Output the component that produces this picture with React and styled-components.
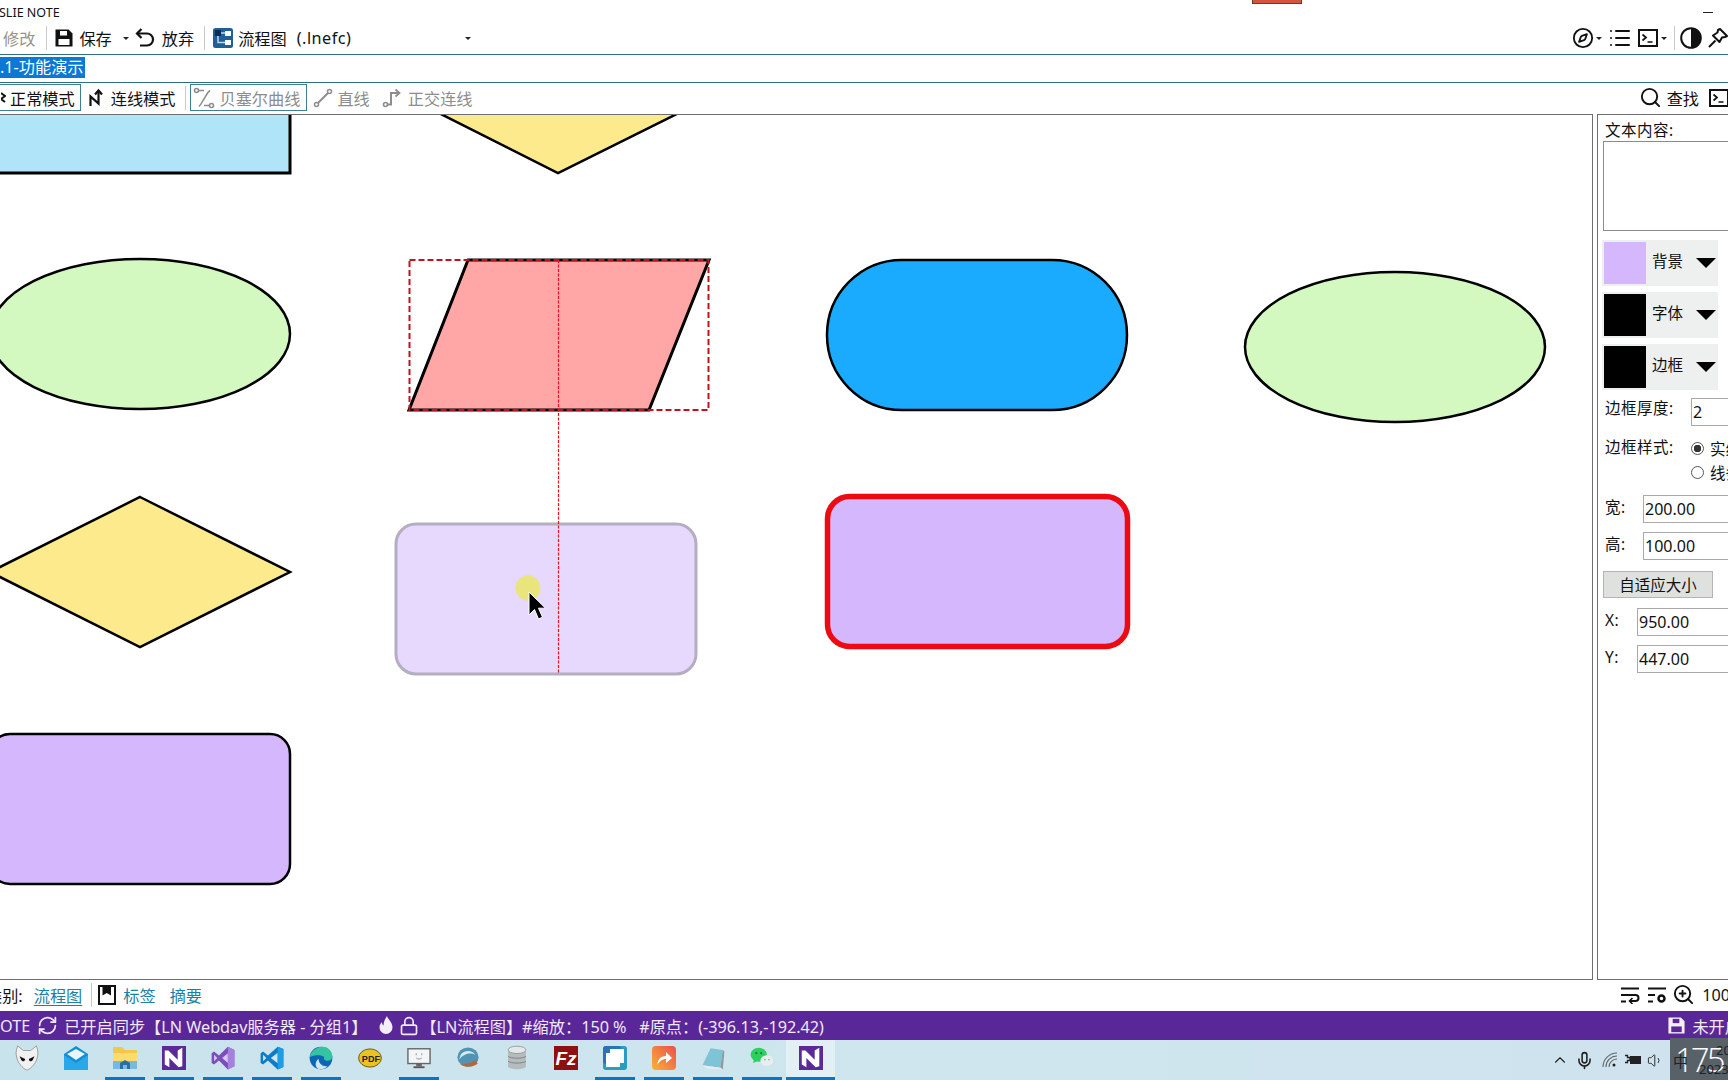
import React from "react";
import styled, { createGlobalStyle } from "styled-components";
import { ChevronUp, Compass, List, Lock, Mic, RefreshCw, Search, Volume1, ZoomIn } from "lucide-react";

const Globalstyles = createGlobalStyle`
  html, body {
    margin: 0;
    width: 1728px;
    height: 1080px;
    overflow: hidden;
    background: #fff;
    font-family: "Noto Sans", "Noto Sans CJK SC", sans-serif;
    color: #111;
  }
  * { box-sizing: border-box; }
`;

const Page = styled.div`
  width: 1728px;
  height: 1080px;
  display: flex;
  flex-direction: column;
  overflow: hidden;
`;

const TitleBar = styled.div`
  height: 24px;
  flex: none;
  display: flex;
  align-items: center;
  justify-content: space-between;
  font-size: 12.5px;
  padding-right: 15px;
  position: relative;
`;

const AppName = styled.span`
  margin-left: -1px;
`;

const TitleTab = styled.div`
  position: absolute;
  left: 1252px;
  top: 0;
  width: 50px;
  height: 4px;
  background: #d2563f;
  border: 1px solid #7d3527;
  border-top: 0;
`;

const MinButton = styled.span`
  width: 10px;
  height: 1px;
  background: #222;
`;

const Bar = styled.div`
  height: ${(p) => p.$height}px;
  flex: none;
  display: flex;
  align-items: center;
  font-size: 16.2px;
  white-space: nowrap;
  padding-bottom: 2px;
  border-bottom: ${(p) => (p.$line ? `1px solid ${p.$line}` : "none")};
`;

const Spacer = styled.div`
  flex: 1;
`;

const Item = styled.span`
  display: inline-flex;
  align-items: center;
  flex: none;
  margin-left: ${(p) => p.$left || 0}px;
  margin-right: ${(p) => p.$right || 0}px;
  color: ${(p) => p.$color || "inherit"};
  letter-spacing: ${(p) => p.$spacing || 0}px;
`;

const Divider = styled.span`
  width: 1px;
  height: 24px;
  flex: none;
  background: #c9c9c9;
  margin-left: ${(p) => p.$left || 0}px;
`;

const Caret = styled.span`
  width: 0;
  height: 0;
  flex: none;
  margin-left: ${(p) => p.$left || 0}px;
  border-left: 3px solid transparent;
  border-right: 3px solid transparent;
  border-top: 3px solid #222;
`;

const ModeButton = styled.span`
  height: 27px;
  flex: none;
  display: inline-flex;
  align-items: center;
  border: 1px solid #3f7f92;
  margin-left: ${(p) => p.$left || 0}px;
  padding: ${(p) => p.$padding};
  color: ${(p) => p.$color || "inherit"};
`;

const TitleInput = styled.div`
  height: 27px;
  display: flex;
  align-items: center;
`;

const Selected = styled.span`
  background: #0a78d4;
  color: #fff;
  line-height: 21px;
  padding-right: 1px;
`;

const Main = styled.div`
  height: 866px;
  flex: none;
  display: flex;
  gap: 4px;
  overflow: hidden;
`;

const Canvas = styled.div`
  width: 1593px;
  flex: none;
  border-top: 1px solid #6f6f6f;
  border-right: 1px solid #6f6f6f;
  border-bottom: 1px solid #6f6f6f;
  overflow: hidden;
`;

const Drawing = styled.svg`
  display: block;
`;

const Panel = styled.div`
  flex: 1;
  min-width: 0;
  border-top: 1px solid #6f6f6f;
  border-left: 1px solid #6f6f6f;
  border-bottom: 1px solid #6f6f6f;
  padding-left: 5px;
  overflow: hidden;
  font-size: 15.5px;
  white-space: nowrap;
`;

const PanelTitle = styled.div`
  height: 26px;
  padding: 5px 0 0 2px;
  line-height: 20px;
  letter-spacing: 0.5px;
`;

const TextArea = styled.div`
  width: 200px;
  height: 90px;
  border: 1px solid #8b8b8b;
`;

const ColorRow = styled.div`
  width: 116px;
  height: 46px;
  display: flex;
  align-items: center;
  background: #eef0ef;
  margin-top: ${(p) => p.$top}px;
  margin-left: -1px;
  padding-left: 2px;
`;

const Swatch = styled.span`
  width: 42px;
  height: 42px;
  flex: none;
  background: ${(p) => p.$color};
`;

const ColorName = styled.span`
  margin-left: 6px;
  padding-bottom: 5px;
  flex: 1;
`;

const BigArrow = styled.span`
  width: 0;
  height: 0;
  flex: none;
  margin-right: 2px;
  border-left: 10px solid transparent;
  border-right: 10px solid transparent;
  border-top: 10px solid #000;
`;

const FieldRow = styled.div`
  display: flex;
  align-items: ${(p) => (p.$start ? "flex-start" : "center")};
  margin-top: ${(p) => p.$top}px;
  padding-left: 2px;
`;

const FieldLabel = styled.span`
  width: ${(p) => p.$width}px;
  flex: none;
  position: relative;
  top: ${(p) => p.$raise || -2}px;
  line-height: 24px;
  letter-spacing: 0.5px;
`;

const Field = styled.input`
  width: 200px;
  height: 28px;
  flex: none;
  border: 1px solid #a9a9a9;
  border-radius: 0;
  padding: 0 1px;
  font: 16px "Noto Sans", sans-serif;
  color: #111;
  outline: none;
`;

const RadioGroup = styled.div`
  display: flex;
  flex-direction: column;
  gap: 2px;
`;

const RadioLine = styled.div`
  height: 22px;
  display: flex;
  align-items: center;
  gap: 6px;
`;

const Radio = styled.span`
  width: 13px;
  height: 13px;
  flex: none;
  border-radius: 50%;
  border: 1px solid #555;
  background: ${(p) => (p.$checked ? "radial-gradient(circle, #333 0 3.5px, #fff 4px)" : "#fff")};
`;

const FitButton = styled.div`
  width: 110px;
  height: 27px;
  margin-top: 11px;
  display: flex;
  align-items: center;
  justify-content: center;
  background: #dfe1de;
  border: 1px solid #b4b4b4;
`;

const LinkTab = styled.span`
  color: #1b7fa6;
  flex: none;
  margin-left: ${(p) => p.$left || 0}px;
  text-decoration: ${(p) => (p.$active ? "underline" : "none")};
  text-underline-offset: 3px;
`;

const StatusBar = styled.div`
  height: 29px;
  flex: none;
  display: flex;
  align-items: center;
  background: #5a2799;
  color: #f0e9f8;
  font-size: 16.2px;
  white-space: nowrap;
`;

const TaskBar = styled.div`
  height: 40px;
  flex: none;
  display: flex;
  align-items: stretch;
  padding-left: 2px;
  background: linear-gradient(90deg, #c9e3ec, #cfe6ee 60%, #cfe2ee);
`;

const TaskSlot = styled.div`
  width: 49px;
  flex: none;
  display: flex;
  align-items: center;
  justify-content: center;
  padding-bottom: 4px;
  background: ${(p) => (p.$active ? "#e2f0f5" : "transparent")};
  position: relative;

  &::after {
    content: "";
    display: ${(p) => (p.$running ? "block" : "none")};
    position: absolute;
    bottom: 0;
    height: 3px;
    left: ${(p) => (p.$active ? "0" : "5px")};
    right: ${(p) => (p.$active ? "0" : "4px")};
    background: #0f74bd;
  }
`;

const Tray = styled.div`
  margin-left: auto;
  display: flex;
  align-items: center;
  color: #222;
`;

const TrayIcon = styled.span`
  display: inline-flex;
  margin-left: ${(p) => p.$left}px;
`;

const TrayText = styled.span`
  font-size: 15px;
  width: 16px;
  margin-left: 9px;
  margin-right: -19px;
  position: relative;
  z-index: 1;
`;

const Clock = styled.div`
  width: 58px;
  height: 42px;
  margin-top: -2px;
  background: #596168;
  color: #fff;
  font: 300 33px/44px "Open Sans", sans-serif;
  overflow: hidden;
  padding-left: 5px;
  letter-spacing: -3px;
  position: relative;
`;

const ClockDate = styled.span`
  position: absolute;
  color: #1d2226;
  font: 400 13px/15px "Noto Sans", sans-serif;
  left: 29px;
  top: 24px;
  letter-spacing: 0;
`;

const ClockYear = styled(ClockDate)`
  left: 46px;
  top: 5px;
`;

const SaveIcon = ({ size = 20, color = "#111" }) => (
  <svg width={size} height={size} viewBox="0 0 20 20" fill="none">
    <path d="M1.500 1.500h13l4 4v13h-17z" fill={color} />
    <rect x="6" y="3" width="7" height="4.500" fill={color === "#111" ? "#fff" : "#5a2799"} />
    <rect x="4.500" y="11" width="11" height="6" fill={color === "#111" ? "#fff" : "#5a2799"} />
  </svg>
);

const UndoIcon = () => (
  <svg width="20" height="20" viewBox="0 0 20 20" fill="none" stroke="#111" strokeWidth="2.200">
    <path d="M2 5.500h10a6 6 0 0 1 0 12H5" />
    <path d="M6.500 1L2 5.500 6.500 10" />
  </svg>
);

const FlowIcon = () => (
  <svg width="20" height="20" viewBox="0 0 20 20">
    <rect width="20" height="20" rx="2.500" fill="#1f5f99" />
    <rect x="2" y="2" width="6" height="6" fill="#0c2c55" />
    <rect x="12" y="3" width="6" height="5" fill="#fff" />
    <rect x="12" y="12" width="6" height="5" fill="#fff" />
    <path d="M8 5h4M5 8v6.500h7" stroke="#bcd8ee" strokeWidth="1.500" fill="none" />
  </svg>
);

const TerminalBox = () => (
  <svg width="20" height="20" viewBox="0 0 20 20" fill="none" stroke="#111" strokeWidth="2">
    <rect x="1" y="2" width="18" height="16" />
    <path d="M4.500 6.500L8 9.500l-3.500 3M9.500 14h5" strokeWidth="1.700" />
  </svg>
);

const ContrastIcon = () => (
  <svg width="22" height="22" viewBox="0 0 22 22">
    <circle cx="11" cy="11" r="9.800" fill="none" stroke="#111" strokeWidth="2" />
    <path d="M11 1a10 10 0 0 1 0 20z" fill="#111" />
  </svg>
);

const PinIcon = () => (
  <svg width="22" height="22" viewBox="0 0 22 22" fill="none" stroke="#111" strokeWidth="2" strokeLinejoin="round">
    <path d="M13 2l7 7-2 1-3 .500-2.500 4.500-6.500-6.500L10.500 5.500 11 3z" />
    <path d="M8.500 13.500L2 20" />
  </svg>
);

const ModeFragment = () => (
  <svg width="5" height="16" viewBox="0 0 5 16" fill="none" stroke="#111" strokeWidth="2">
    <path d="M0 3l4 3-4 3M0 9l4 3" />
  </svg>
);

const ConnectIcon = () => (
  <svg width="16" height="20" viewBox="0 0 16 20" fill="none" stroke="#111" strokeWidth="2.200">
    <path d="M1.500 18V8.500l8 7V3" />
    <path d="M6 6.500l3.500-4 3.500 4" />
  </svg>
);

const BezierIcon = () => (
  <svg width="22" height="22" viewBox="0 0 22 22" fill="none" stroke="#8d8d8d" strokeWidth="1.600">
    <circle cx="3.500" cy="3.500" r="2" />
    <circle cx="18.500" cy="18.500" r="2" />
    <path d="M6 3.500h5M11 18.500h5M17 3.500c-3 2-4 6-7 10-1 2-2 4-4 6" />
  </svg>
);

const LineIcon = () => (
  <svg width="20" height="20" viewBox="0 0 20 20" fill="none" stroke="#8d8d8d" strokeWidth="1.500">
    <circle cx="3.500" cy="16.500" r="2" />
    <circle cx="16.500" cy="3.500" r="2" />
    <path d="M5 15L15 5" strokeWidth="2" />
  </svg>
);

const OrthoIcon = () => (
  <svg width="20" height="20" viewBox="0 0 20 20" fill="none" stroke="#8d8d8d" strokeWidth="1.600">
    <circle cx="3.500" cy="16.500" r="2" />
    <path d="M5.500 16.500H9V5h7" strokeWidth="2" />
    <path d="M13.500 1.500L17.500 5l-4 3.500" strokeWidth="1.800" />
  </svg>
);

const BookmarkBox = () => (
  <svg width="18" height="20" viewBox="0 0 18 20" fill="none">
    <rect x="1" y="1" width="16" height="18" stroke="#111" strokeWidth="2" />
    <path d="M4.500 1h8.500v9.500l-4.200-2.500-4.300 2.500z" fill="#111" />
  </svg>
);

const WrapLines = () => (
  <svg width="20" height="18" viewBox="0 0 20 18" fill="none" stroke="#111" strokeWidth="2">
    <path d="M1 2.500h18M1 9h14.500a3 3 0 0 1 0 6H10M1 15.500h5" />
    <path d="M12.500 12l-3 3 3 3" strokeWidth="1.600" />
  </svg>
);

const GearLines = () => (
  <svg width="20" height="18" viewBox="0 0 20 18" fill="none" stroke="#111" strokeWidth="2">
    <path d="M1 2.500h18M1 9h7M1 15.500h5" />
    <circle cx="14.500" cy="12.500" r="3" strokeWidth="2.500" />
  </svg>
);

const FlameIcon = () => (
  <svg width="16" height="20" viewBox="0 0 16 20" fill="#f4eef9">
    <path d="M9 0c.5 3 5.500 6 5.500 11.500a6.500 6.500 0 0 1-13 0c0-2.500 1-4 2.500-5.500 0 2 .5 3 1.500 3.500C5.500 6 7 3 9 0z" />
  </svg>
);

const WifiIcon = () => (
  <svg width="16" height="16" viewBox="0 0 16 16" fill="none" stroke="#333" strokeWidth="1.100">
    <path d="M1 15A14 14 0 0 1 15 1M4 15A11 11 0 0 1 15 4M7 15a8 8 0 0 1 8-8" opacity=".7" />
    <circle cx="12" cy="13" r="1.500" fill="#222" stroke="none" />
  </svg>
);

const BatteryIcon = () => (
  <svg width="17" height="14" viewBox="0 0 17 14">
    <path d="M1 2.500h2.500v2H6v3H3.500v2H1" fill="none" stroke="#222" strokeWidth="1.300" />
    <rect x="6" y="3" width="11" height="8" fill="#222" />
  </svg>
);

const AlienApp = () => (
  <svg width="30" height="30" viewBox="0 0 32 32">
    <path d="M6 3l6 5h8l6-5c2 5 2 9 1 12-1 6-6 12-11 14-5-2-10-8-11-14-1-3-1-7 1-12z" fill="#f1f1f1" stroke="#9a9a9a" />
    <path d="M8 14l6 3c0 3-3 3-4 1.500zM24 14l-6 3c0 3 3 3 4 1.500z" fill="#111" />
  </svg>
);

const MailApp = () => (
  <svg width="26" height="26" viewBox="0 0 26 26">
    <path d="M1 9L13 1l12 8v16H1z" fill="#0f8fd8" />
    <path d="M4 9L13 4l9 5-9 6z" fill="#e8f5fb" />
    <path d="M1 10l12 8 12-8v15H1z" fill="#29a7e6" />
  </svg>
);

const FolderApp = () => (
  <svg width="24" height="24" viewBox="0 0 24 24">
    <path d="M0 1h9l3 3h12v17H0z" fill="#f4c64a" />
    <path d="M0 7h24v10H0z" fill="#fbdc6d" />
    <rect x="0" y="15" width="24" height="8" fill="#7ab9dc" />
    <path d="M7 23v-6l5-3 5 3v6h-3v-4h-4v4z" fill="#2c6ea3" />
  </svg>
);

const NoteApp = () => (
  <svg width="24" height="24" viewBox="0 0 26 26">
    <rect width="26" height="26" fill="#5c2a98" />
    <path d="M3 5h4l10 10V5l5-3v20l-4 1L8 13v10l-5-3z" fill="#fff" />
  </svg>
);

const StudioApp = () => (
  <svg width="26" height="26" viewBox="0 0 32 32">
    <path d="M22 2l8 4v20l-8 4-11-11-6 5-3-2V10l3-2 6 5z" fill="#7c4dbd" />
    <path d="M22 10v12l-7-6z" fill="#d9c6f1" />
    <path d="M5 12l4 4-4 4z" fill="#d9c6f1" />
    <path d="M22 2l8 4v20l-8 4z" fill="#a67fe0" />
  </svg>
);

const CodeApp = () => (
  <svg width="26" height="26" viewBox="0 0 32 32">
    <path d="M23 2l7 3v22l-7 3-12-11-6 5-3-2V10l3-2 6 5z" fill="#0d7cc6" />
    <path d="M23 9.500v13L14.500 16z" fill="#cfe6ee" />
    <path d="M5 12l4 4-4 4z" fill="#cfe6ee" />
    <path d="M23 2l7 3v22l-7 3z" fill="#1f9de4" />
  </svg>
);

const EdgeApp = () => (
  <svg width="26" height="26" viewBox="0 0 32 32">
    <circle cx="16" cy="16" r="14" fill="#0c65b5" />
    <path d="M2 15C4 6 12 2 18 2c7 0 12 6 12 12 0 4-4 6-8 5-2-.5-3-2-2-4-3-3-12-3-18 0z" fill="#35c4a0" />
    <path d="M13 17c0 6 5 10 11 9-3 3-8 5-12 3-4-3-3-9 1-12z" fill="#cfe6ee" />
  </svg>
);

const PdfApp = () => (
  <svg width="24" height="20" viewBox="0 0 26 22">
    <ellipse cx="13" cy="11" rx="12.500" ry="10" fill="#e9c41e" stroke="#5e5218" />
    <text x="14" y="15" textAnchor="middle" fontSize="10" fontWeight="700" fontFamily="Liberation Sans" fill="#222">PDF</text>
  </svg>
);

const MonitorApp = () => (
  <svg width="24" height="24" viewBox="0 0 26 26">
    <rect x="1" y="3" width="24" height="16" fill="#f2f6f7" stroke="#666" strokeWidth="1.500" />
    <path d="M10 8v2M16 8v2M10 13c2 1.500 4 1.500 6 0" stroke="#888" fill="none" />
    <rect x="10" y="19" width="6" height="3" fill="#666" />
    <rect x="7" y="22" width="12" height="2" fill="#555" />
  </svg>
);

const SwirlApp = () => (
  <svg width="26" height="26" viewBox="0 0 32 32">
    <ellipse cx="16" cy="15" rx="13" ry="12" fill="#4f94b3" />
    <path d="M5 18c6-8 15-9 20-6-4-6-14-6-18 0z" fill="#d5ecf4" />
    <path d="M6 24c6 3 15 4 22-1l-3-5c-3 3-10 5-19 6z" fill="#b2683c" />
  </svg>
);

const DiskApp = () => (
  <svg width="22" height="26" viewBox="0 0 26 32">
    <path d="M2 6v20c0 5 22 5 22 0V6z" fill="#b4bcbe" />
    <ellipse cx="13" cy="6" rx="11" ry="4.500" fill="#e4e8e8" stroke="#8b9395" />
    <path d="M2 14c4 3 18 3 22 0M2 20c4 3 18 3 22 0" stroke="#777" fill="none" />
  </svg>
);

const ZillaApp = () => (
  <svg width="24" height="24" viewBox="0 0 24 24">
    <rect width="24" height="24" fill="#8e1010" />
    <text x="12" y="19" textAnchor="middle" fontSize="19" fontWeight="700" fontStyle="italic" fontFamily="Liberation Sans" fill="#fff">Fz</text>
  </svg>
);

const WindowApp = () => (
  <svg width="24" height="24" viewBox="0 0 24 24">
    <rect width="24" height="24" rx="3" fill="#2a9cc0" />
    <rect y="0" width="18" height="18" rx="3" fill="#2a73b8" />
    <rect x="3" y="7" width="14" height="14" fill="#fff" />
    <rect x="7" y="3" width="14" height="14" fill="#fff" />
  </svg>
);

const ShareApp = () => (
  <svg width="24" height="24" viewBox="0 0 24 24">
    <defs>
      <linearGradient id="shareGrad" x1="0" y1="1" x2="1" y2="0">
        <stop offset="0" stopColor="#f9b233" />
        <stop offset="1" stopColor="#ee4d4d" />
      </linearGradient>
    </defs>
    <rect width="24" height="24" rx="4" fill="url(#shareGrad)" />
    <path d="M5 19c1-6 4-9 9-9V6l6 6-6 5v-4c-4 0-6 2-9 6z" fill="#fff" />
  </svg>
);

const PadApp = () => (
  <svg width="26" height="26" viewBox="0 0 32 32">
    <path d="M3 25L13 4l15 2-3 22z" fill="#7fc4d6" />
    <path d="M25 28l3-22 2 2-2 22z" fill="#8d9a9e" />
    <path d="M3 25l22 3 3 2-20-1z" fill="#e6eced" />
  </svg>
);

const ChatApp = () => (
  <svg width="26" height="26" viewBox="0 0 32 32">
    <ellipse cx="12" cy="12" rx="10" ry="8.500" fill="#2bd05f" />
    <path d="M6 18l-1 4 5-2z" fill="#2bd05f" />
    <circle cx="9" cy="10" r="1.300" fill="#0f7a3a" />
    <circle cx="15" cy="10" r="1.300" fill="#0f7a3a" />
    <ellipse cx="22" cy="19" rx="8" ry="6.500" fill="#e8eeef" />
    <circle cx="19.500" cy="18" r="1" fill="#9aa3a5" />
    <circle cx="24.500" cy="18" r="1" fill="#9aa3a5" />
  </svg>
);

const apps = [
  { Icon: AlienApp },
  { Icon: MailApp },
  { Icon: FolderApp, running: true },
  { Icon: NoteApp, running: true },
  { Icon: StudioApp, running: true },
  { Icon: CodeApp, running: true },
  { Icon: EdgeApp, running: true },
  { Icon: PdfApp },
  { Icon: MonitorApp, running: true },
  { Icon: SwirlApp },
  { Icon: DiskApp },
  { Icon: ZillaApp },
  { Icon: WindowApp, running: true },
  { Icon: ShareApp, running: true },
  { Icon: PadApp, running: true },
  { Icon: ChatApp, running: true },
  { Icon: NoteApp, running: true, active: true },
];

function FlowCanvas() {
  return (
    <Drawing width="1592" height="864" viewBox="0 115 1592 864">
      <g stroke="#000" strokeWidth="2.500">
        <rect x="-10" y="24" width="300" height="149" fill="#b0e4f8" strokeWidth="3" />
        <path d="M558 24L709 98 558 173 409 98z" fill="#fdea8c" />
        <ellipse cx="140" cy="334" rx="150" ry="75" fill="#d4f9c0" />
        <path d="M468 260H709L649 410H409z" fill="#ffa6a6" strokeWidth="3" />
        <rect x="827" y="260" width="300" height="150" rx="75" fill="#1aabff" />
        <ellipse cx="1395" cy="347" rx="150" ry="75" fill="#d4f9c0" />
        <path d="M140 497L290 572 140 647-10 572z" fill="#fdea8c" />
        <rect x="-10" y="734" width="300" height="150" rx="20" fill="#d4b7fd" />
      </g>
      <rect x="396" y="524" width="300" height="150" rx="20" fill="#e6d9fd" stroke="#b5aec0" strokeWidth="3" />
      <rect x="827.500" y="496.500" width="300" height="150" rx="22" fill="#d4b7fd" stroke="#ee0a12" strokeWidth="5.500" />
      <rect x="409.500" y="260" width="299" height="150" fill="none" stroke="#c0131c" strokeWidth="2" strokeDasharray="6 3" />
      <path d="M558.500 260V674" stroke="#ee1020" strokeWidth="1.200" strokeDasharray="3 1.500" />
      <circle cx="528" cy="588" r="12.500" fill="#e9e56e" opacity=".9" />
      <path d="M529 592v23l5.500-5.500 4 9.500 4-1.800-4-9h7z" fill="#000" stroke="#fff" strokeWidth="1" />
    </Drawing>
  );
}

function PropertyPanel() {
  return (
    <Panel>
      <PanelTitle>文本内容:</PanelTitle>
      <TextArea />
      <ColorRow $top={9}>
        <Swatch $color="#d4b7fd" />
        <ColorName>背景</ColorName>
        <BigArrow />
      </ColorRow>
      <ColorRow $top={6}>
        <Swatch $color="#000" />
        <ColorName>字体</ColorName>
        <BigArrow />
      </ColorRow>
      <ColorRow $top={6}>
        <Swatch $color="#000" />
        <ColorName>边框</ColorName>
        <BigArrow />
      </ColorRow>
      <FieldRow $top={8}>
        <FieldLabel $width={86} $raise={-4}>边框厚度:</FieldLabel>
        <Field readOnly value="2" />
      </FieldRow>
      <FieldRow $top={11} $start>
        <FieldLabel $width={86} $raise={-2}>边框样式:</FieldLabel>
        <RadioGroup>
          <RadioLine>
            <Radio $checked />
            <span>实线</span>
          </RadioLine>
          <RadioLine>
            <Radio />
            <span>线条</span>
          </RadioLine>
        </RadioGroup>
      </FieldRow>
      <FieldRow $top={12}>
        <FieldLabel $width={38}>宽:</FieldLabel>
        <Field readOnly value="200.00" />
      </FieldRow>
      <FieldRow $top={9}>
        <FieldLabel $width={38}>高:</FieldLabel>
        <Field readOnly value="100.00" />
      </FieldRow>
      <FitButton>自适应大小</FitButton>
      <FieldRow $top={10}>
        <FieldLabel $width={32}>X:</FieldLabel>
        <Field readOnly value="950.00" />
      </FieldRow>
      <FieldRow $top={9}>
        <FieldLabel $width={32}>Y:</FieldLabel>
        <Field readOnly value="447.00" />
      </FieldRow>
    </Panel>
  );
}

export default function App() {
  return (
    <>
      <Globalstyles />
      <Page>
        <TitleBar>
          <AppName>SLIE NOTE</AppName>
          <TitleTab />
          <MinButton />
        </TitleBar>

        <Bar $height={31} $line="#2d6f80">
          <Item $left={3} $color="#9a948a">修改</Item>
          <Divider $left={11} />
          <Item $left={7}><SaveIcon /></Item>
          <Item $left={5}>保存</Item>
          <Caret $left={11} />
          <Item $left={6}><UndoIcon /></Item>
          <Item $left={7}>放弃</Item>
          <Divider $left={10} />
          <Item $left={8}><FlowIcon /></Item>
          <Item $left={5}>流程图</Item>
          <Item $left={10} $spacing={0.5}>(.lnefc)</Item>
          <Caret $left={114} />
          <Spacer />
          <Compass size={22} strokeWidth={2} />
          <Caret $left={2} />
          <Item $left={6}><List size={24} strokeWidth={2} /></Item>
          <Item $left={6}><TerminalBox /></Item>
          <Caret $left={3} />
          <Divider $left={7} />
          <Item $left={5}><ContrastIcon /></Item>
          <Item $left={5} $right={-1}><PinIcon /></Item>
        </Bar>

        <Bar $height={28} $line="#2d6f80">
          <TitleInput>
            <Selected>.1-功能演示</Selected>
          </TitleInput>
        </Bar>

        <Bar $height={31}>
          <ModeButton $left={-1} $padding="0 5px 0 1px">
            <ModeFragment />
            <Item $left={4}>正常模式</Item>
          </ModeButton>
          <Item $left={8}><ConnectIcon /></Item>
          <Item $left={6}>连线模式</Item>
          <Divider $left={9} />
          <ModeButton $left={4} $padding="0 6px 0 2px" $color="#8d8d8d">
            <BezierIcon />
            <Item $left={5}>贝塞尔曲线</Item>
          </ModeButton>
          <Item $left={6}><LineIcon /></Item>
          <Item $left={4} $color="#8d8d8d">直线</Item>
          <Item $left={12}><OrthoIcon /></Item>
          <Item $left={6} $color="#8d8d8d">正交连线</Item>
          <Spacer />
          <Search size={23} strokeWidth={2} />
          <Item $left={5}>查找</Item>
          <Item $left={10} $right={-1}><TerminalBox /></Item>
        </Bar>

        <Main>
          <Canvas>
            <FlowCanvas />
          </Canvas>
          <PropertyPanel />
        </Main>

        <Bar $height={31}>
          <Item $left={-14}>类别:</Item>
          <LinkTab $left={11} $active>流程图</LinkTab>
          <Divider $left={9} />
          <Item $left={6}><BookmarkBox /></Item>
          <LinkTab $left={7}>标签</LinkTab>
          <LinkTab $left={14}>摘要</LinkTab>
          <Spacer />
          <WrapLines />
          <Item $left={7}><GearLines /></Item>
          <Item $left={5}><ZoomIn size={23} strokeWidth={2} /></Item>
          <Item $left={7} $right={-2}>100</Item>
        </Bar>

        <StatusBar>
          <Item>OTE</Item>
          <Item $left={7}><RefreshCw size={21} strokeWidth={2} /></Item>
          <Item $left={6}>已开启同步【LN Webdav服务器 - 分组1】</Item>
          <Item $left={11}><FlameIcon /></Item>
          <Item $left={5}><Lock size={20} strokeWidth={2} /></Item>
          <Item $left={1}>【LN流程图】#缩放&#xFF1A;150 %&nbsp;&nbsp;&nbsp;#原点&#xFF1A;(-396.13,-192.42)</Item>
          <Spacer />
          <SaveIcon size={19} color="#f4eef9" />
          <Item $left={6} $right={-13}>未开启</Item>
        </StatusBar>

        <TaskBar>
          {apps.map(({ Icon, running, active }, i) => (
            <TaskSlot key={i} $running={running} $active={active}>
              <Icon />
            </TaskSlot>
          ))}
          <Tray>
            <ChevronUp size={18} strokeWidth={1.500} />
            <TrayIcon $left={6}><Mic size={19} strokeWidth={2} /></TrayIcon>
            <TrayIcon $left={8}><WifiIcon /></TrayIcon>
            <TrayIcon $left={6}><BatteryIcon /></TrayIcon>
            <TrayIcon $left={6}><Volume1 size={17} strokeWidth={1.300} /></TrayIcon>
            <TrayText>中</TrayText>
            <Clock>
              175
              <ClockYear>20</ClockYear>
              <ClockDate>2023/</ClockDate>
            </Clock>
          </Tray>
        </TaskBar>
      </Page>
    </>
  );
}
